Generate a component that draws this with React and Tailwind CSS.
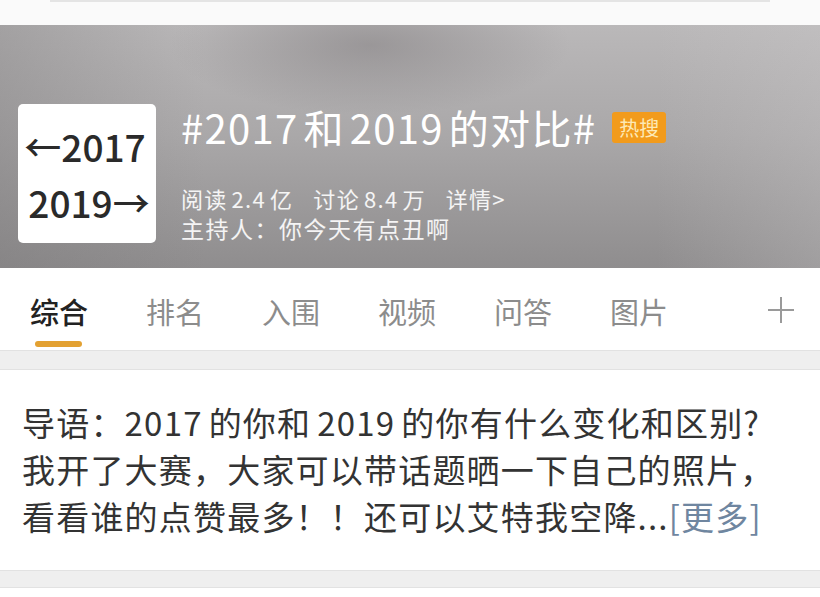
import React from 'react';

const tabs = ['综合', '排名', '入围', '视频', '问答', '图片'];

const font = { fontFamily: '"Noto Sans CJK SC", "Noto Sans", sans-serif' };

const Gap = ({ w = 'w-[5px]' }) => <span className={`inline-block ${w}`} />;

export default function App() {
  return (
    <div className="w-[820px] h-[597px] overflow-hidden bg-white" style={font}>
      {/* 顶部残留 */}
      <div className="h-[25px] bg-[#fafafa] flex justify-center">
        <div className="w-[720px] h-[2px] bg-[#e4e4e4]" />
      </div>

      {/* 话题头部 */}
      <div className="relative h-[243px] bg-[linear-gradient(180deg,#bab8b9_0%,#aaa8a9_45%,#8f8d8e_100%)]">
        <div className="absolute inset-0 bg-[radial-gradient(ellipse_200px_70px_at_370px_20px,rgba(130,126,128,0.55),transparent)]" />
        <div className="absolute inset-0 bg-[linear-gradient(90deg,rgba(120,118,119,0.35)_0%,transparent_25%,transparent_80%,rgba(210,208,209,0.25)_100%)]" />
        <div className="relative flex items-start pt-[79px] pl-[18px]">
          <div className="w-[138px] h-[139px] bg-white rounded-[5px] flex flex-col items-center justify-center text-[#2a2a2a] text-[37px] leading-[56px] font-medium">
            <span className="-ml-[4px]">←2017</span>
            <span className="ml-[4px]">2019→</span>
          </div>
          <div className="ml-[25px] flex flex-col">
            <div className="flex items-center">
              <span className="text-white text-[40px] leading-[46px] tracking-[1.3px]">
                #2017<Gap />和<Gap />2019<Gap />的对比#
              </span>
              <span className="ml-[16px] w-[54px] h-[31px] rounded-[3px] bg-[#f29b1c] text-[#fde9b5] text-[20px] leading-[31px] text-center">热搜</span>
            </div>
            <div className="mt-[33px] text-white/90 text-[22px] leading-[30px] tracking-[1.3px]">
              <div>
                阅读<Gap w="w-[4px]" />2.4<Gap w="w-[4px]" />亿<Gap w="w-[20px]" />讨论<Gap w="w-[4px]" />8.4<Gap w="w-[4px]" />万<Gap w="w-[20px]" />详情&gt;
              </div>
              <div className="text-[23px] tracking-[1.5px]">主持人：你今天有点丑啊</div>
            </div>
          </div>
        </div>
      </div>

      {/* 标签栏 */}
      <div className="h-[82px] bg-white flex items-start pl-[30px] pr-[26px] pt-[25px]">
        {tabs.map((t, i) => (
          <div key={t} className="w-[116px] flex flex-col items-start">
            <span className={`text-[29px] leading-[36px] ${i === 0 ? 'text-[#222] font-medium' : 'text-[#8c8c8c]'}`}>{t}</span>
            {i === 0 && <span className="mt-[12px] ml-[5px] w-[47px] h-[6px] rounded-full bg-[#e3a132]" />}
          </div>
        ))}
        <div className="ml-auto mt-[4px] relative w-[26px] h-[26px]">
          <span className="absolute left-[12px] top-0 w-[2px] h-[26px] bg-[#9a9a9a]" />
          <span className="absolute left-0 top-[12px] w-[26px] h-[2px] bg-[#9a9a9a]" />
        </div>
      </div>

      <div className="h-[20px] bg-[#efefef] border-t border-b border-[#e2e2e2]" />

      {/* 导语 */}
      <div className="h-[200px] bg-white px-[22px] pt-[29px] text-[33px] leading-[47px] text-[#333] whitespace-nowrap tracking-[1.2px]">
        <div>导语：2017<Gap w="w-[6px]" />的你和<Gap w="w-[6px]" />2019<Gap w="w-[6px]" />的你有什么变化和区别?</div>
        <div>我开了大赛，大家可以带话题晒一下自己的照片，</div>
        <div>
          看看谁的点赞最多！！还可以艾特我空降...<span className="text-[#6f86a0]">[更多]</span>
        </div>
      </div>

      <div className="h-[18px] bg-[#efefef] border-t border-b border-[#e2e2e2]" />
      <div className="bg-white h-[20px]" />
    </div>
  );
}
